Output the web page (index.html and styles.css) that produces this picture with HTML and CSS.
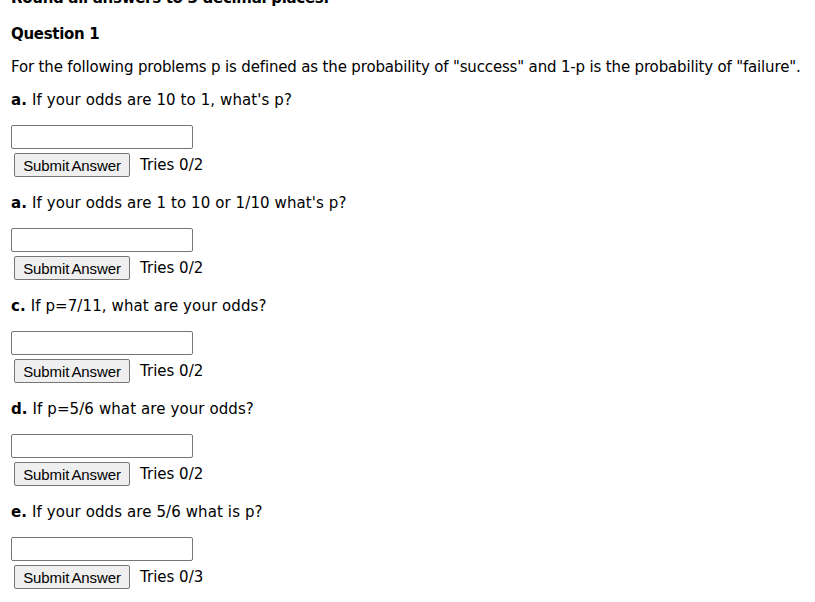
FILE: index.html
```html
<!DOCTYPE html>
<html>
<head>
<meta charset="utf-8">
<link rel="stylesheet" href="styles.css">
</head>
<body>
<div class="page">
  <p class="intro">Round all answers to 3 decimal places.</p>
  <p class="qtitle">Question 1</p>
  <p class="desc">For the following problems p is defined as the probability of "success" and 1-p is the probability of "failure".</p>

  <div class="part">
    <p class="prompt"><b>a.</b> If your odds are 10 to 1, what's p?</p>
    <input class="answer" type="text">
    <div class="submit-row"><button class="btn">Submit Answer</button><span class="tries">Tries 0/2</span></div>
  </div>

  <div class="part">
    <p class="prompt"><b>a.</b> If your odds are 1 to 10 or 1/10 what's p?</p>
    <input class="answer" type="text">
    <div class="submit-row"><button class="btn">Submit Answer</button><span class="tries">Tries 0/2</span></div>
  </div>

  <div class="part">
    <p class="prompt"><b>c.</b> If p=7/11, what are your odds?</p>
    <input class="answer" type="text">
    <div class="submit-row"><button class="btn">Submit Answer</button><span class="tries">Tries 0/2</span></div>
  </div>

  <div class="part">
    <p class="prompt"><b>d.</b> If p=5/6 what are your odds?</p>
    <input class="answer" type="text">
    <div class="submit-row"><button class="btn">Submit Answer</button><span class="tries">Tries 0/2</span></div>
  </div>

  <div class="part">
    <p class="prompt"><b>e.</b> If your odds are 5/6 what is p?</p>
    <input class="answer" type="text">
    <div class="submit-row"><button class="btn">Submit Answer</button><span class="tries">Tries 0/3</span></div>
  </div>
</div>
</body>
</html>
```

FILE: styles.css
```css
html, body {
  margin: 0;
  padding: 0;
  background: #ffffff;
}
.page {
  padding: 0 11px;
  margin-top: -11px;
  font-family: "DejaVu Sans", Verdana, sans-serif;
  font-size: 15px;
  color: #000000;
  line-height: 18px;
}
.page p {
  margin: 0;
  white-space: nowrap;
}
.intro {
  font-weight: bold;
  letter-spacing: -0.3px;
}
.page .qtitle {
  font-weight: bold;
  margin-top: 18px;
  letter-spacing: -0.3px;
}
.page .desc {
  margin-top: 15px;
  letter-spacing: -0.16px;
}
.part {
  display: flex;
  flex-direction: column;
  align-items: flex-start;
}
.page .prompt {
  margin-top: 15px;
  letter-spacing: 0.1px;
}
.page .part + .part .prompt {
  margin-top: 17px;
}
.answer {
  box-sizing: border-box;
  width: 182px;
  height: 24px;
  margin: 16px 0 0 0;
  border: 1px solid #767676;
  border-radius: 2px;
  padding: 1px 2px;
  background: #ffffff;
  font: 13px "Liberation Sans", Arial, sans-serif;
}
.submit-row {
  display: flex;
  align-items: center;
  height: 24px;
  margin-top: 4px;
  padding-left: 3px;
}
.btn {
  box-sizing: border-box;
  height: 24px;
  width: 116px;
  padding: 0;
  border: 1px solid #767676;
  border-radius: 2px;
  background: #efefef;
  font: 15px "Liberation Sans", Arial, sans-serif;
  letter-spacing: -0.1px;
  word-spacing: -1px;
  color: #000000;
}
.tries {
  margin-left: 10px;
}
```
